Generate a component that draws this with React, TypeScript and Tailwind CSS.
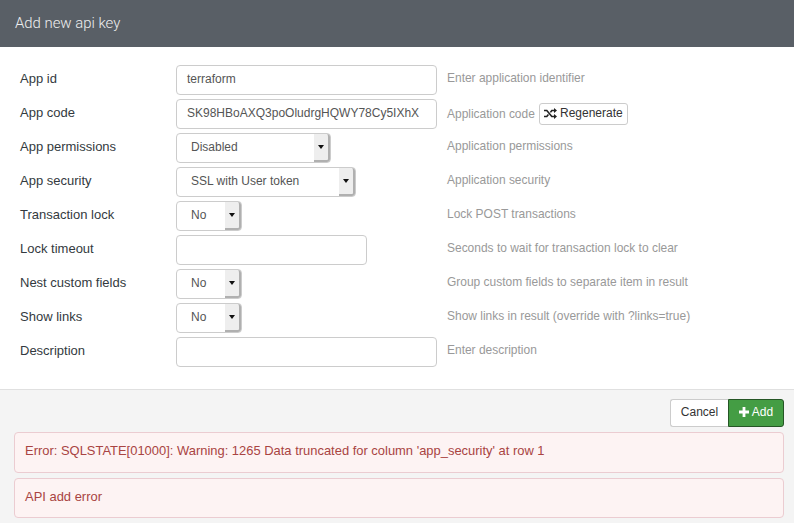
import React from "react";

const sans = "font-['Liberation_Sans',Arial,sans-serif]";

function Row({ label, children, help }: { label: string; children: React.ReactNode; help: React.ReactNode }) {
  return (
    <div className="flex h-[30px] items-center">
      <label className={`w-[156px] pb-[3px] text-[13px] leading-[20px] text-[#333a40] ${sans}`}>{label}</label>
      <div className="w-[271px] shrink-0">{children}</div>
      <div className={`flex items-center pb-[4px] text-[11.98px] leading-[14px] text-[#999999] ${sans}`}>{help}</div>
    </div>
  );
}

function Input({ value = "", width }: { value?: string; width: string }) {
  return (
    <div className={`flex h-[30px] items-center rounded-[4px] border border-[#cccccc] bg-white px-[10px] pb-[2px] text-[12px] text-[#555555] ${sans} ${width}`}>
      {value}
    </div>
  );
}

function Select({ value, width }: { value: string; width: string }) {
  return (
    <div className={`flex h-[30px] items-center rounded-[4px] border border-[#cccccc] bg-white text-[12px] text-[#555555] ${sans} ${width}`}>
      <span className="flex-1 pb-[2px] pl-[14px]">{value}</span>
      <span className="flex h-full w-[16px] items-center justify-center rounded-r-[3px] border-r-2 border-b-2 border-r-[#b0b0b0] border-b-[#b0b0b0] bg-[#eeeeee]">
        <span className="h-0 w-0 border-x-[3.5px] border-t-[4px] border-x-transparent border-t-[#111111]" />
      </span>
    </div>
  );
}

export default function App() {
  return (
    <div className="flex h-[523px] w-[794px] flex-col overflow-hidden bg-white">
      <header className="flex h-[47px] shrink-0 items-center bg-[#595f66] px-[15px] pb-[1px] font-['Roboto',sans-serif] text-[14.9px] font-light text-[#eeeff0]">
        Add new api key
      </header>
      <main className="flex h-[342px] shrink-0 flex-col gap-[4px] pl-[20px] pt-[18px]">
        <Row label="App id" help="Enter application identifier"><Input value="terraform" width="w-[261px]" /></Row>
        <Row
          label="App code"
          help={
            <>
              <span className="mt-[4px]">Application code</span>
              <span className="ml-[4px] mt-[4px] flex h-[22px] w-[89px] items-center justify-center gap-[3px] rounded-[3px] border border-[#cccccc] bg-white pb-[2px] text-[12px] text-[#333333]">
                <svg width="13" height="11" viewBox="0 0 13 11" fill="none" stroke="#222222" strokeWidth="1.6">
                  <path d="M0 2.5h2.8l5 6h2.2M0 8.5h2.8l1.6-1.9M6.4 4.4l1.4-1.9h2.2" />
                  <path d="M10 0 13 2.5 10 5zM10 6 13 8.5 10 11z" fill="#222222" stroke="none" />
                </svg>
                Regenerate
              </span>
            </>
          }
        >
          <Input value="SK98HBoAXQ3poOludrgHQWY78Cy5IXhX" width="w-[261px]" />
        </Row>
        <Row label="App permissions" help="Application permissions"><Select value="Disabled" width="w-[155px]" /></Row>
        <Row label="App security" help="Application security"><Select value="SSL with User token" width="w-[180px]" /></Row>
        <Row label="Transaction lock" help="Lock POST transactions"><Select value="No" width="w-[66px]" /></Row>
        <Row label="Lock timeout" help="Seconds to wait for transaction lock to clear"><Input width="w-[191px]" /></Row>
        <Row label="Nest custom fields" help="Group custom fields to separate item in result"><Select value="No" width="w-[66px]" /></Row>
        <Row label="Show links" help="Show links in result (override with ?links=true)"><Select value="No" width="w-[66px]" /></Row>
        <Row label="Description" help="Enter description"><Input width="w-[261px]" /></Row>
      </main>
      <footer className={`flex flex-1 flex-col border-t border-[#e0e0e0] bg-[#f4f4f4] px-[10px] pl-[14px] pt-[9px] ${sans}`}>
        <div className="flex justify-end">
          <button className="flex h-[28px] w-[58px] items-center justify-center rounded-l-[3px] border border-r-0 border-[#cccccc] bg-white pb-[2px] text-[12px] text-[#333333]">Cancel</button>
          <button className="flex h-[28px] w-[56px] items-center justify-center gap-[3px] rounded-r-[3px] border border-[#255625] bg-[#449d44] pb-[2px] text-[12px] text-white">
            <svg width="10" height="10" viewBox="0 0 10 10" fill="white"><path d="M3.6 0h2.8v3.6H10v2.8H6.4V10H3.6V6.4H0V3.6h3.6z" /></svg>
            Add
          </button>
        </div>
        <div className="mt-[5px] flex h-[41px] items-center rounded-[4px] border border-[#ebccd1] bg-[#fdf3f3] px-[10px] pb-[3px] text-[12.95px] text-[#a94442]">
          Error: SQLSTATE[01000]: Warning: 1265 Data truncated for column 'app_security' at row 1
        </div>
        <div className="mt-[5px] flex h-[40px] items-center rounded-[4px] border border-[#ebccd1] bg-[#fdf3f3] px-[10px] pb-[3px] text-[12.95px] text-[#a94442]">
          API add error
        </div>
      </footer>
    </div>
  );
}
